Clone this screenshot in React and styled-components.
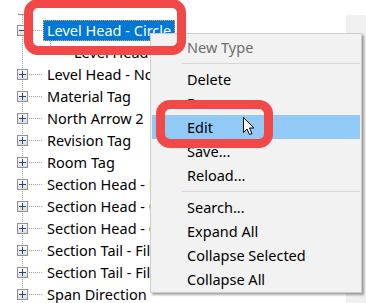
import React, { useId } from "react";
import styled, { createGlobalStyle } from "styled-components";

const GlobalStyle = createGlobalStyle`
  html, body { margin: 0; padding: 0; background: #ffffff; }
  body {
    font-family: "Segoe UI", "Noto Sans", "Open Sans", sans-serif;
    font-size: 14.5px;
    color: #000;
  }
`;

const Page = styled.div`
  position: relative;
  display: flex;
  width: 366px;
  height: 303px;
  overflow: hidden;
  background: #ffffff;
`;

const TreePane = styled.div`
  flex: 1;
  overflow: hidden;
`;

const Tree = styled.ul`
  list-style: none;
  margin: -3px 0 0 0;
  padding: 0;
`;

const Row = styled.li`
  display: flex;
  align-items: center;
  height: 22px;
  white-space: nowrap;
`;

const Label = styled.span`
  display: inline-flex;
  align-items: center;
  height: 21px;
  box-sizing: border-box;
  padding: 0 3px 1px 3px;
  border: 1px ${(p) => (p.$selected ? "dotted #f0a040" : "solid transparent")};
  background: ${(p) => (p.$selected ? "#0078d7" : "transparent")};
  color: ${(p) => (p.$selected ? "#ffffff" : "#000000")};
`;

const SideStrip = styled.div`
  width: 20px;
  margin-top: 15px;
  background: #f0f0f0;
`;

const Menu = styled.div`
  position: absolute;
  left: 150px;
  top: 33px;
  width: 212px;
  box-sizing: border-box;
  padding: 1px;
  background: #f2f2f2;
  border: 1px solid #cccccc;
  box-shadow: 2px 2px 2px rgba(0, 0, 0, 0.35);
  display: flex;
  flex-direction: column;
`;

const Item = styled.div`
  height: 24px;
  display: flex;
  align-items: center;
  padding-left: 35px;
  padding-bottom: 1px;
  box-sizing: border-box;
  color: ${(p) => (p.$disabled ? "#6d6d6d" : "#000000")};
  background: ${(p) => (p.$active ? "#91c9f7" : "transparent")};
`;

const Separator = styled.div`
  height: 8px;
  display: flex;
  align-items: center;
  padding-left: 30px;
  &::after {
    content: "";
    flex: 1;
    height: 1px;
    background: #d7d7d7;
  }
`;

const Callout = styled.div`
  position: absolute;
  left: ${(p) => p.$x}px;
  top: ${(p) => p.$y}px;
  width: ${(p) => p.$w}px;
  height: ${(p) => p.$h}px;
  box-sizing: border-box;
  border: 9px solid #f24848;
  border-radius: 14px;
`;

const Cursor = styled.svg`
  position: absolute;
  left: 242px;
  top: 116px;
`;

const LINE = "#a0a0a0";

function Gutter({ kind, child }) {
  const id = useId();
  if (child) {
    return (
      <svg width="70" height="22" style={{ flexShrink: 0 }}>
        <line x1="22.5" y1="0" x2="22.5" y2="22" stroke={LINE} strokeDasharray="1 1" />
        <line x1="50.5" y1="0" x2="50.5" y2="11.5" stroke={LINE} strokeDasharray="1 1" />
        <line x1="51" y1="11.5" x2="70" y2="11.5" stroke={LINE} strokeDasharray="1 1" />
      </svg>
    );
  }
  if (kind === "cut") {
    return (
      <svg width="43" height="22" style={{ flexShrink: 0 }}>
        <line x1="18" y1="17.5" x2="27" y2="17.5" stroke="#919191" />
        <line x1="22.5" y1="18" x2="22.5" y2="22" stroke={LINE} strokeDasharray="1 1" />
      </svg>
    );
  }
  return (
    <svg width="43" height="22" style={{ flexShrink: 0 }}>
      <defs>
        <linearGradient id={id} x1="0" y1="0" x2="0" y2="1">
          <stop offset="0" stopColor="#ffffff" />
          <stop offset="1" stopColor="#dcdcdc" />
        </linearGradient>
      </defs>
      <line x1="22.5" y1="0" x2="22.5" y2="22" stroke={LINE} strokeDasharray="1 1" />
      <line x1="29" y1="11.5" x2="43" y2="11.5" stroke={LINE} strokeDasharray="1 1" />
      <rect x="17.5" y="6.5" width="10" height="10" fill={`url(#${id})`} stroke="#919191" />
      <line x1="19" y1="11.5" x2="26" y2="11.5" stroke="#25467f" />
      {kind === "plus" && (
        <line x1="22.5" y1="8" x2="22.5" y2="15" stroke="#25467f" />
      )}
    </svg>
  );
}

const rows = [
  { label: "", kind: "cut" },
  { label: "Level Head - Circle", kind: "minus", selected: true },
  { label: "Level Head", child: true },
  { label: "Level Head - No Bubble", kind: "plus" },
  { label: "Material Tag", kind: "plus" },
  { label: "North Arrow 2", kind: "plus" },
  { label: "Revision Tag", kind: "plus" },
  { label: "Room Tag", kind: "plus" },
  { label: "Section Head - Filled", kind: "plus" },
  { label: "Section Head - Open", kind: "plus" },
  { label: "Section Head - Circle", kind: "plus" },
  { label: "Section Tail - Filled", kind: "plus" },
  { label: "Section Tail - Filled 2", kind: "plus" },
  { label: "Span Direction", kind: "plus" },
];

const menu = [
  { label: "New Type", disabled: true },
  { sep: true },
  { label: "Delete" },
  { label: "Rename" },
  { label: "Edit", active: true },
  { label: "Save..." },
  { label: "Reload..." },
  { sep: true },
  { label: "Search..." },
  { label: "Expand All" },
  { label: "Collapse Selected" },
  { label: "Collapse All" },
];

export default function App() {
  return (
    <>
      <GlobalStyle />
      <Page>
        <TreePane>
          <Tree>
            {rows.map((r, i) => (
              <Row key={i}>
                <Gutter kind={r.kind} child={r.child} />
                {r.label && <Label $selected={r.selected}>{r.label}</Label>}
              </Row>
            ))}
          </Tree>
        </TreePane>
        <SideStrip />
        <Menu>
          {menu.map((m, i) =>
            m.sep ? (
              <Separator key={i} />
            ) : (
              <Item key={i} $disabled={m.disabled} $active={m.active}>
                {m.label}
              </Item>
            )
          )}
        </Menu>
        <Callout $x={24} $y={-1} $w={162} $h={56} />
        <Callout $x={156} $y={100} $w={117} $h={48} />
        <Cursor width="13" height="20" viewBox="0 0 13 20">
          <path
            d="M1.5 1.5 L1.5 16.5 L5 13 L7.5 18.5 L10 17.5 L7.5 12 L12 12 Z"
            fill="#ffffff"
            stroke="#000000"
            strokeWidth="1"
            strokeLinejoin="miter"
          />
        </Cursor>
      </Page>
    </>
  );
}
